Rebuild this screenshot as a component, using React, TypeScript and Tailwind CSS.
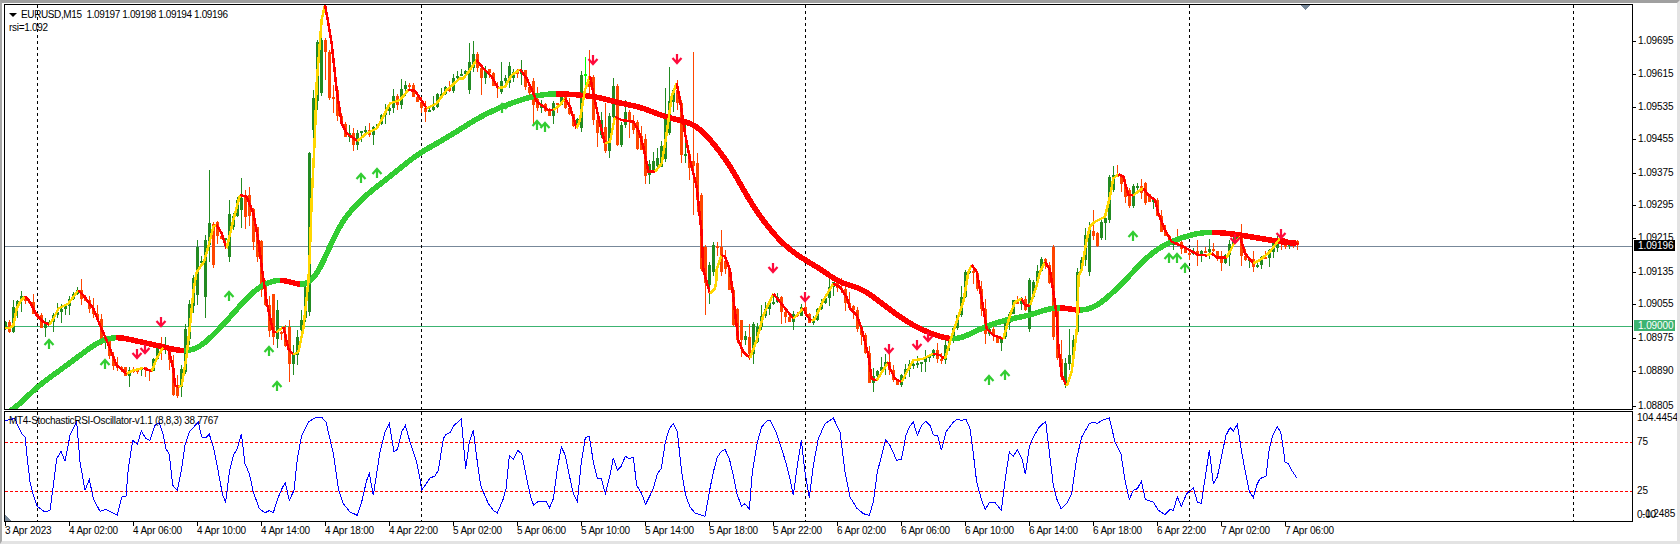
import React from "react";

type Pt = [number, number];

// traced from the chart in chunks: [offsetX, offsetY, x, y, x, y...] at 3x scale
function trace(chunks: number[][]): Pt[] {
  const out: Pt[] = [];
  for (const c of chunks) {
    for (let i = 2; i < c.length; i += 2) out.push([c[0] + c[i] / 3, c[1] + c[i + 1] / 3]);
  }
  return out;
}

const fast = trace([
  [0, 272, 15, 168, 30, 168, 40, 160, 50, 110, 60, 90, 75, 72, 90, 90, 110, 130, 130, 150, 148, 158, 160, 140, 175, 110, 205, 95, 235, 55, 250, 70, 280, 110, 300, 160, 320, 205, 350, 280, 380, 305, 400, 295, 430, 288, 455, 298, 470, 260, 490, 225, 505, 230, 520, 290, 525, 340, 535, 345, 545, 340, 560, 250, 570, 160, 580, 60, 590, 0],
  [0, 0, 612, 785, 625, 740, 640, 680, 650, 675, 665, 700, 680, 745, 700, 660, 720, 585, 740, 590, 760, 640, 775, 720, 785, 800],
  [0, 272, 800, 90, 820, 180, 830, 180, 850, 165, 865, 230, 880, 248, 895, 240, 910, 170, 925, 30],
  [0, 0, 930, 750, 935, 600, 945, 400, 950, 250, 965, 60, 975, 15, 985, 70, 995, 130, 1010, 270, 1025, 370, 1040, 400, 1072, 423, 1100, 400, 1130, 385, 1150, 350, 1170, 310, 1200, 300, 1225, 270, 1245, 272, 1260, 295],
  [420, 0, 20, 325, 50, 310, 80, 270, 120, 235, 130, 235, 150, 210, 170, 180, 190, 205, 215, 230, 235, 265, 255, 260, 275, 225, 300, 208, 320, 235, 340, 280, 350, 305, 385, 330, 400, 330, 420, 315, 435, 295, 450, 320, 470, 385, 480, 360, 495, 270, 510, 228, 520, 280, 535, 350, 555, 430, 570, 425, 585, 350, 605, 360, 640, 365, 655, 390, 670, 440, 685, 515, 705, 515, 725, 490, 740, 400, 755, 290, 770, 250, 780, 300, 795, 400, 810, 480, 830, 560, 845, 700, 850, 810],
  [420, 272, 860, 30, 870, 65, 885, 50, 890, 20],
  [420, 0, 890, 810, 905, 765, 915, 770, 930, 810],
  [420, 272, 945, 120, 955, 205, 970, 240, 990, 258, 1010, 205, 1030, 130, 1060, 65, 1080, 90, 1100, 115, 1120, 140, 1140, 120, 1150, 108, 1160, 130, 1175, 148, 1185, 140, 1210, 85, 1240, 35],
  [840, 272, 0, 45, 20, 75, 30, 110, 50, 130, 65, 170, 85, 250, 95, 320, 110, 325, 145, 270, 150, 290, 165, 320, 185, 330, 200, 300, 220, 265, 250, 260, 280, 245, 300, 250, 315, 260, 330, 210, 350, 150, 370, 90, 385, 0],
  [840, 0, 395, 795, 410, 815],
  [840, 272, 425, 80, 440, 170, 460, 190, 490, 200, 510, 130, 525, 90, 545, 80, 555, 100, 570, 100, 590, 40, 600, 0],
  [840, 0, 615, 785, 630, 810],
  [840, 272, 640, 60, 650, 130, 655, 220, 665, 310, 680, 342, 695, 300, 710, 180, 716, 10],
  [840, 0, 725, 810, 740, 720, 750, 680, 765, 665, 795, 650, 810, 590, 820, 535, 835, 523, 850, 530, 865, 585, 880, 586, 900, 570, 910, 565, 925, 585, 945, 600, 955, 640, 975, 690, 995, 725, 1030, 740, 1075, 765, 1100, 766, 1115, 760, 1130, 772, 1160, 773, 1180, 735, 1200, 710, 1215, 760, 1240, 790, 1260, 780],
  [1260, 0, 30, 755, 60, 715, 115, 733],
]);

const slowRaw = trace([
  [0, 272, 0, 440, 45, 410, 110, 345, 200, 280, 300, 205, 350, 192, 400, 205, 470, 220, 555, 240, 590, 235, 640, 190, 700, 125, 750, 65, 790, 35, 830, 22, 860, 22, 915, 50, 950, 15, 965, 0],
  [0, 0, 985, 740, 1010, 690, 1050, 630, 1110, 575, 1170, 530, 1230, 480, 1260, 458],
  [420, 0, 60, 425, 110, 395, 180, 350, 250, 318, 330, 290, 395, 280, 460, 283, 540, 292, 600, 310, 660, 320, 720, 345, 770, 360, 825, 370, 860, 405, 900, 455, 940, 510, 980, 590, 1020, 650, 1080, 725, 1130, 765, 1210, 812],
  [840, 272, 0, 35, 60, 45, 120, 90, 200, 150, 270, 185, 350, 207, 420, 170, 490, 145, 570, 130, 640, 105, 660, 103, 700, 115, 728, 117, 745, 116, 790, 90, 840, 40, 880, 0],
  [840, 0, 930, 760, 1000, 720, 1090, 695, 1170, 700, 1260, 715],
  [1260, 0, 60, 725, 115, 733],
]);

const stoch = trace([
  [0, 272, 15, 447, 30, 442, 45, 440, 55, 465, 65, 485, 75, 495, 82, 560, 90, 630, 100, 670, 112, 703, 135, 720, 150, 715, 160, 640, 170, 560, 183, 538, 195, 568, 210, 490, 230, 450, 240, 570, 255, 655, 268, 622, 280, 680, 300, 718, 318, 712, 352, 730, 365, 675, 378, 672, 385, 590, 398, 505, 412, 517, 424, 477, 438, 500, 450, 505, 465, 460, 478, 452, 490, 490, 498, 530, 508, 548, 518, 640, 532, 655, 545, 590, 555, 520, 568, 480, 595, 450, 605, 495, 616, 498, 628, 487, 640, 525, 655, 600, 668, 670, 677, 690, 688, 600, 700, 550, 712, 530, 724, 485, 735, 575, 748, 605, 760, 660, 778, 710, 795, 722, 808, 716, 820, 722, 835, 675, 848, 645, 856, 633, 868, 685, 882, 655, 892, 560, 905, 490, 925, 450, 945, 438, 965, 436, 978, 450, 1000, 545, 1015, 650, 1030, 695, 1050, 720, 1072, 730, 1085, 690, 1100, 625, 1108, 605, 1120, 670, 1140, 540, 1155, 480, 1168, 455, 1182, 540, 1192, 532, 1205, 480, 1216, 460, 1230, 510, 1250, 570, 1260, 620],
  [420, 272, 5, 655, 30, 618, 45, 612, 55, 595, 70, 500, 78, 487, 90, 482, 100, 462, 124, 441, 137, 590, 148, 510, 160, 475, 172, 570, 182, 640, 190, 660, 205, 695, 220, 715, 232, 723, 250, 680, 258, 650, 268, 550, 280, 562, 293, 535, 305, 545, 318, 610, 332, 675, 341, 700, 352, 690, 378, 688, 388, 708, 400, 680, 412, 590, 424, 525, 436, 550, 448, 610, 460, 665, 472, 688, 484, 570, 496, 497, 508, 493, 520, 570, 532, 618, 544, 620, 556, 665, 570, 610, 580, 557, 592, 595, 604, 582, 616, 553, 628, 560, 640, 556, 650, 640, 665, 665, 677, 697, 700, 650, 712, 605, 724, 590, 736, 510, 748, 470, 760, 455, 772, 480, 785, 600, 797, 670, 810, 705, 825, 723, 855, 733, 870, 650, 880, 600, 892, 555, 905, 537, 915, 532, 928, 560, 940, 610, 952, 670, 965, 703, 975, 695, 988, 712, 997, 600, 1012, 510, 1025, 465, 1040, 447, 1050, 445, 1070, 485, 1085, 530, 1100, 580, 1110, 620, 1120, 670, 1132, 580, 1144, 505, 1155, 600, 1168, 677, 1180, 580, 1195, 500, 1215, 455, 1240, 438, 1260, 480],
  [840, 272, 15, 600, 30, 675, 50, 708, 70, 725, 88, 730, 100, 690, 112, 600, 125, 550, 137, 503, 150, 520, 170, 565, 184, 562, 198, 490, 208, 465, 220, 450, 232, 490, 245, 460, 258, 448, 270, 460, 280, 488, 293, 492, 304, 535, 318, 480, 340, 450, 352, 442, 365, 445, 378, 442, 390, 470, 400, 545, 410, 630, 425, 685, 436, 712, 448, 692, 465, 692, 484, 715, 496, 620, 508, 540, 520, 553, 532, 532, 546, 560, 556, 607, 568, 525, 580, 495, 598, 465, 617, 448, 628, 540, 640, 640, 650, 680, 663, 710, 680, 695, 695, 665, 710, 560, 725, 495, 748, 455, 760, 450, 772, 455, 785, 445, 808, 438, 825, 510, 843, 547, 856, 630, 868, 682, 880, 655, 892, 650, 904, 628, 916, 682, 940, 690, 955, 715, 975, 728, 990, 712, 1000, 715, 1012, 675, 1024, 703, 1040, 665, 1060, 648, 1072, 690, 1084, 695, 1095, 620, 1108, 535, 1120, 635, 1132, 615, 1145, 550, 1158, 490, 1170, 467, 1180, 477, 1192, 457, 1205, 540, 1218, 610, 1228, 658, 1240, 677, 1250, 640, 1260, 620],
  [1260, 272, 18, 612, 28, 530, 38, 490, 52, 465, 62, 480, 70, 530, 75, 570, 85, 575, 95, 595, 110, 617],
]);

// x, bodyTop, bodyBottom, wickTop, wickBottom, colour
type Bar = [number, number, number, number, number, string];
const G = "#228b22";
const R = "#ff4500";
const bigBars: Bar[] = [
  [173, 369, 395, 355, 396, R], [177, 385, 396, 375, 398, R], [181, 369, 387, 365, 397, G], [185, 329, 372, 324, 374, G],
  [189, 304, 339, 300, 345, G], [197, 247, 295, 240, 305, G], [205, 240, 297, 235, 318, G],
  [209, 223, 245, 170, 262, G], [213, 224, 265, 222, 268, R], [229, 214, 257, 200, 262, G], [241, 198, 210, 178, 228, G],
  [245, 195, 217, 190, 229, R], [253, 209, 242, 208, 250, R], [261, 241, 290, 240, 297, R],
  [273, 294, 337, 294, 345, R], [277, 310, 339, 300, 348, G], [289, 327, 364, 320, 382, R], [293, 355, 364, 345, 375, G],
  [297, 337, 355, 330, 365, G], [301, 320, 330, 310, 340, G], [309, 153, 312, 152, 316, G], [313, 98, 130, 90, 146, G],
  [321, 40, 93, 38, 96, G], [325, 40, 52, 38, 80, R], [329, 52, 98, 50, 100, R], [333, 97, 99, 85, 113, R],
  [469, 62, 90, 43, 94, G], [473, 54, 68, 41, 72, G], [477, 54, 68, 52, 72, R], [481, 68, 78, 65, 95, R], [485, 70, 78, 66, 84, G],
  [501, 81, 92, 62, 94, G], [509, 66, 83, 62, 88, G], [533, 81, 105, 78, 124, R],
  [581, 75, 128, 71, 132, G], [585, 74, 76, 57, 90, "#00ff00"], [589, 76, 87, 50, 95, R], [593, 77, 120, 75, 125, R], [597, 120, 133, 118, 147, R],
  [601, 120, 135, 112, 138, G], [605, 127, 151, 103, 153, R], [609, 116, 151, 113, 158, G], [613, 86, 117, 78, 130, G], [617, 86, 145, 84, 146, R],
  [621, 125, 145, 122, 147, G], [625, 112, 125, 100, 128, G], [629, 112, 122, 110, 138, R], [637, 122, 149, 120, 150, R],
  [645, 139, 176, 134, 184, R], [649, 164, 175, 160, 184, G], [653, 161, 170, 152, 172, G], [657, 158, 166, 148, 170, G],
  [665, 115, 159, 88, 162, G], [669, 101, 133, 67, 135, G], [673, 90, 102, 88, 112, G], [677, 90, 103, 80, 110, R],
  [681, 103, 155, 100, 163, R], [685, 154, 156, 123, 163, G], [689, 154, 168, 150, 180, R], [693, 161, 166, 52, 215, R],
  [697, 163, 200, 153, 212, R], [701, 195, 269, 193, 271, R], [705, 247, 283, 245, 315, R], [709, 265, 285, 262, 304, G],
  [713, 245, 272, 242, 276, G], [717, 246, 248, 242, 256, R], [721, 247, 272, 230, 276, R],
  [737, 309, 340, 308, 343, R], [741, 320, 340, 325, 357, R], [745, 336, 340, 331, 345, G], [749, 337, 354, 324, 360, R], [753, 324, 354, 322, 364, G],
  [870, 370, 380, 368, 390, R], [1029, 280, 329, 278, 332, G], [1053, 247, 337, 245, 340, R], [1057, 309, 358, 305, 360, R], [1061, 359, 377, 340, 380, R],
  [1065, 363, 385, 358, 388, G], [1069, 355, 364, 329, 370, G], [1073, 340, 355, 335, 358, G], [1077, 272, 332, 268, 335, G],
  [1089, 227, 272, 222, 276, G], [1093, 231, 236, 210, 240, R], [1097, 233, 246, 232, 247, R], [1101, 222, 238, 220, 240, G], [1105, 218, 223, 215, 240, G],
  [1109, 177, 220, 175, 223, G], [1129, 190, 206, 188, 208, R], [1133, 186, 206, 184, 208, G], [1145, 183, 203, 182, 205, R],
  [1273, 243, 252, 240, 258, G], [1277, 238, 248, 236, 252, G], [1281, 239, 244, 236, 250, R], [1285, 241, 247, 240, 249, R],
  [1289, 241, 246, 240, 249, G], [1293, 241, 245, 240, 248, R], [1297, 241, 245, 240, 250, R],
];

function yAt(pts: Pt[], x: number) {
  if (x <= pts[0][0]) return pts[0][1];
  for (let i = 1; i < pts.length; i++) {
    if (x <= pts[i][0]) {
      const [ax, ay] = pts[i - 1];
      const [bx, by] = pts[i];
      return ay + ((x - ax) / Math.max(bx - ax, 0.01)) * (by - ay);
    }
  }
  return pts[pts.length - 1][1];
}

// the thick average is a smooth curve, so round off the traced corners
function smooth(pts: Pt[]): Pt[] {
  const first = pts[0][0];
  const last = pts[pts.length - 1][0];
  let out: Pt[] = [];
  for (let x = first; x <= last; x += 4) out.push([x, yAt(pts, x)]);
  for (let pass = 0; pass < 2; pass++) {
    out = out.map((p, i) => {
      const from = Math.max(0, i - 2);
      const part = out.slice(from, i + 3);
      return [p[0], part.reduce((sum, q) => sum + q[1], 0) / part.length] as Pt;
    });
  }
  return out;
}

const slow = smooth(slowRaw);

function makeBars(): Bar[] {
  let seed = 1234;
  const rnd = () => {
    seed = (seed * 16807) % 2147483647;
    return seed / 2147483647;
  };
  const big = new Map(bigBars.map((b) => [b[0], b]));
  const bars: Bar[] = [];
  let prev = yAt(fast, 5);
  for (let x = 5; x <= 1297; x += 4) {
    const close = yAt(fast, x + 3) + (rnd() - 0.5) * 12;
    const override = big.get(x);
    if (override) {
      bars.push(override);
    } else {
      const top = Math.min(prev, close);
      const bottom = Math.max(prev, close, top + 2);
      const a = rnd();
      const b = rnd();
      bars.push([x, top, bottom, top - a * a * 12, bottom + b * b * 12, close < prev ? G : R]);
    }
    prev = close;
  }
  return bars;
}

// split a traced line where its direction flips, so each run gets its own colour
function runs(pts: Pt[]) {
  const out: { rising: boolean; pts: Pt[] }[] = [];
  let rising = true;
  for (let i = 1; i < pts.length; i++) {
    const dy = pts[i][1] - pts[i - 1][1];
    const next = dy === 0 ? rising : dy < 0;
    if (!out.length || next !== rising) out.push({ rising: next, pts: [pts[i - 1]] });
    rising = next;
    out[out.length - 1].pts.push(pts[i]);
  }
  return out;
}

const toPoints = (pts: Pt[]) => pts.map((p) => `${p[0]},${p[1]}`).join(" ");

const upArrows: Pt[] = [[49, 344], [105, 364], [229, 296], [269, 351], [277, 386], [361, 178], [377, 173], [502, 108], [537, 125], [545, 127], [1133, 236], [1169, 258], [1177, 258], [1185, 268], [989, 380], [1005, 375]];
const downArrows: Pt[] = [[161, 322], [137, 354], [145, 349], [593, 60], [677, 59], [773, 268], [805, 297], [889, 349], [917, 345], [928, 337], [1235, 239], [1281, 234]];
const periodLines = [37, 421, 805, 1189, 1573];

const priceLabels: { y: number; text: string; kind?: "black" | "green" }[] = [
  { y: 41, text: "1.09695" },
  { y: 74, text: "1.09615" },
  { y: 107, text: "1.09535" },
  { y: 139, text: "1.09455" },
  { y: 173, text: "1.09375" },
  { y: 205, text: "1.09295" },
  { y: 238, text: "1.09215" },
  { y: 272, text: "1.09135" },
  { y: 304, text: "1.09055" },
  { y: 338, text: "1.08975" },
  { y: 371, text: "1.08890" },
  { y: 406, text: "1.08805" },
  { y: 246, text: "1.09196", kind: "black" },
  { y: 326, text: "1.09000", kind: "green" },
];

const timeLabels = ["3 Apr 2023", "4 Apr 02:00", "4 Apr 06:00", "4 Apr 10:00", "4 Apr 14:00", "4 Apr 18:00", "4 Apr 22:00", "5 Apr 02:00", "5 Apr 06:00", "5 Apr 10:00", "5 Apr 14:00", "5 Apr 18:00", "5 Apr 22:00", "6 Apr 02:00", "6 Apr 06:00", "6 Apr 10:00", "6 Apr 14:00", "6 Apr 18:00", "6 Apr 22:00", "7 Apr 02:00", "7 Apr 06:00"];

function PriceChart() {
  const bars = makeBars();
  return (
    <svg width={1627} height={404} viewBox="5 5 1627 404" shapeRendering="crispEdges" className="block">
      <line x1={5} x2={1632} y1={246.5} y2={246.5} stroke="#778899" />
      <line x1={5} x2={1632} y1={326.5} y2={326.5} stroke="#3cb371" />
      {periodLines.map((x) => (
        <line key={x} x1={x + 0.5} x2={x + 0.5} y1={5} y2={409} stroke="#000" strokeDasharray="3 3" />
      ))}
      {bars.map(([x, top, bottom, wickTop, wickBottom, color]) => (
        <g key={x} fill={color}>
          <rect x={x} y={wickTop} width={1} height={wickBottom - wickTop} />
          <rect x={x - 1} y={top} width={3} height={bottom - top} />
        </g>
      ))}
      {runs(slow).map((run, i) => (
        <polyline key={i} points={toPoints(run.pts)} fill="none" strokeWidth={5.5} stroke={run.rising ? "#32cd32" : "#ff0000"} />
      ))}
      {runs(fast).map((run, i) => (
        <polyline key={i} points={toPoints(run.pts)} fill="none" strokeWidth={2.5} strokeLinejoin="round" stroke={run.rising ? "#ffd700" : "#ff0000"} />
      ))}
      <g fill="none" strokeWidth={2.2} shapeRendering="auto">
        {upArrows.map(([x, y]) => (
          <path key={`${x}-${y}`} d={`M${x} ${y + 5}V${y - 4}M${x - 4.5} ${y + 1}L${x} ${y - 4}L${x + 4.5} ${y + 1}`} stroke="#32cd32" />
        ))}
        {downArrows.map(([x, y]) => (
          <path key={`${x}-${y}`} d={`M${x} ${y - 5}V${y + 4}M${x - 4.5} ${y - 1}L${x} ${y + 4}L${x + 4.5} ${y - 1}`} stroke="#ff0a3c" />
        ))}
      </g>
      <polygon points="1301,5 1310,5 1305.5,10" fill="#778899" />
    </svg>
  );
}

function StochChart() {
  return (
    <svg width={1627} height={109} viewBox="5 412 1627 109" shapeRendering="crispEdges" className="block">
      <line x1={5} x2={1632} y1={442.5} y2={442.5} stroke="#ff0000" strokeDasharray="3 2" />
      <line x1={5} x2={1632} y1={491.5} y2={491.5} stroke="#ff0000" strokeDasharray="3 2" />
      {periodLines.map((x) => (
        <line key={x} x1={x + 0.5} x2={x + 0.5} y1={412} y2={521} stroke="#000" strokeDasharray="3 3" />
      ))}
      <polyline points={toPoints(stoch)} fill="none" stroke="#0000ff" />
      <polygon points="5,515 5,521 11,521" fill="#778899" />
    </svg>
  );
}

function PriceLabel({ y, text, kind }: { y: number; text: string; kind?: "black" | "green" }) {
  if (kind) {
    return (
      <div
        className={`absolute left-[1px] h-[11px] w-[41px] pl-[4px] text-white leading-[11px] tracking-[-0.1px] ${kind === "black" ? "bg-black" : "bg-[#3cb371]"}`}
        style={{ top: y - 10 }}
      >
        {text}
      </div>
    );
  }
  return (
    <div className="absolute left-0 flex h-[12px] items-center leading-[12px] tracking-[-0.1px]" style={{ top: y - 10 }}>
      <span className="mr-[2px] h-[1px] w-[3px] bg-black" />
      {text}
    </div>
  );
}

export default function App() {
  return (
    <div className="h-[544px] w-[1680px] overflow-hidden border-t-[3px] border-r-[3px] border-b-[3px] border-l-[2px] border-t-[#a0a0a0] border-r-[#e3e3e3] border-b-[#e3e3e3] border-l-[#a8a8a8] bg-white pt-[1px] pl-[2px] font-['Liberation_Sans',sans-serif] text-[10px] tracking-[-0.3px] text-black">
      <div className="flex h-[406px]">
        <div className="relative w-[1629px] border border-black">
          <PriceChart />
          <div className="absolute top-[3px] left-[4px] flex flex-col leading-[13px]">
            <div className="flex items-center gap-[4px] tracking-[-0.38px] whitespace-pre">
              <span className="h-0 w-0 border-x-[4px] border-t-[4px] border-x-transparent border-t-black" />
              <span>EURUSD,M15&nbsp;&nbsp;1.09197 1.09198 1.09194 1.09196</span>
            </div>
            <div>rsi=1.092</div>
          </div>
        </div>
        <div className="relative flex-1">
          {priceLabels.map((label) => (
            <PriceLabel key={label.text} {...label} />
          ))}
        </div>
      </div>
      <div className="mt-[1px] flex h-[111px]">
        <div className="relative w-[1629px] border border-black">
          <StochChart />
          <div className="absolute top-[3px] left-[4px] leading-[12px]">MT4-StochasticRSI-Oscillator-v1.1 (8,8,3) 38.7767</div>
        </div>
        <div className="flex flex-1 flex-col pt-[1px] pl-[4px] leading-[12px] tracking-[-0.1px]">
          <div>104.4454</div>
          <div className="mt-[12px]">75</div>
          <div className="mt-[37px]">25</div>
          <div className="relative mt-[12px]">
            0.00
            <span className="absolute top-[-1px] left-[5px]">-1.2485</span>
          </div>
        </div>
      </div>
      <div className="ml-[1px] flex">
        {timeLabels.map((label) => (
          <div key={label} className="w-[64px] shrink-0 whitespace-nowrap tracking-[-0.2px]">
            <div className="h-[4px] w-[1px] bg-black" />
            <div className="leading-[10px]">{label}</div>
          </div>
        ))}
      </div>
    </div>
  );
}
